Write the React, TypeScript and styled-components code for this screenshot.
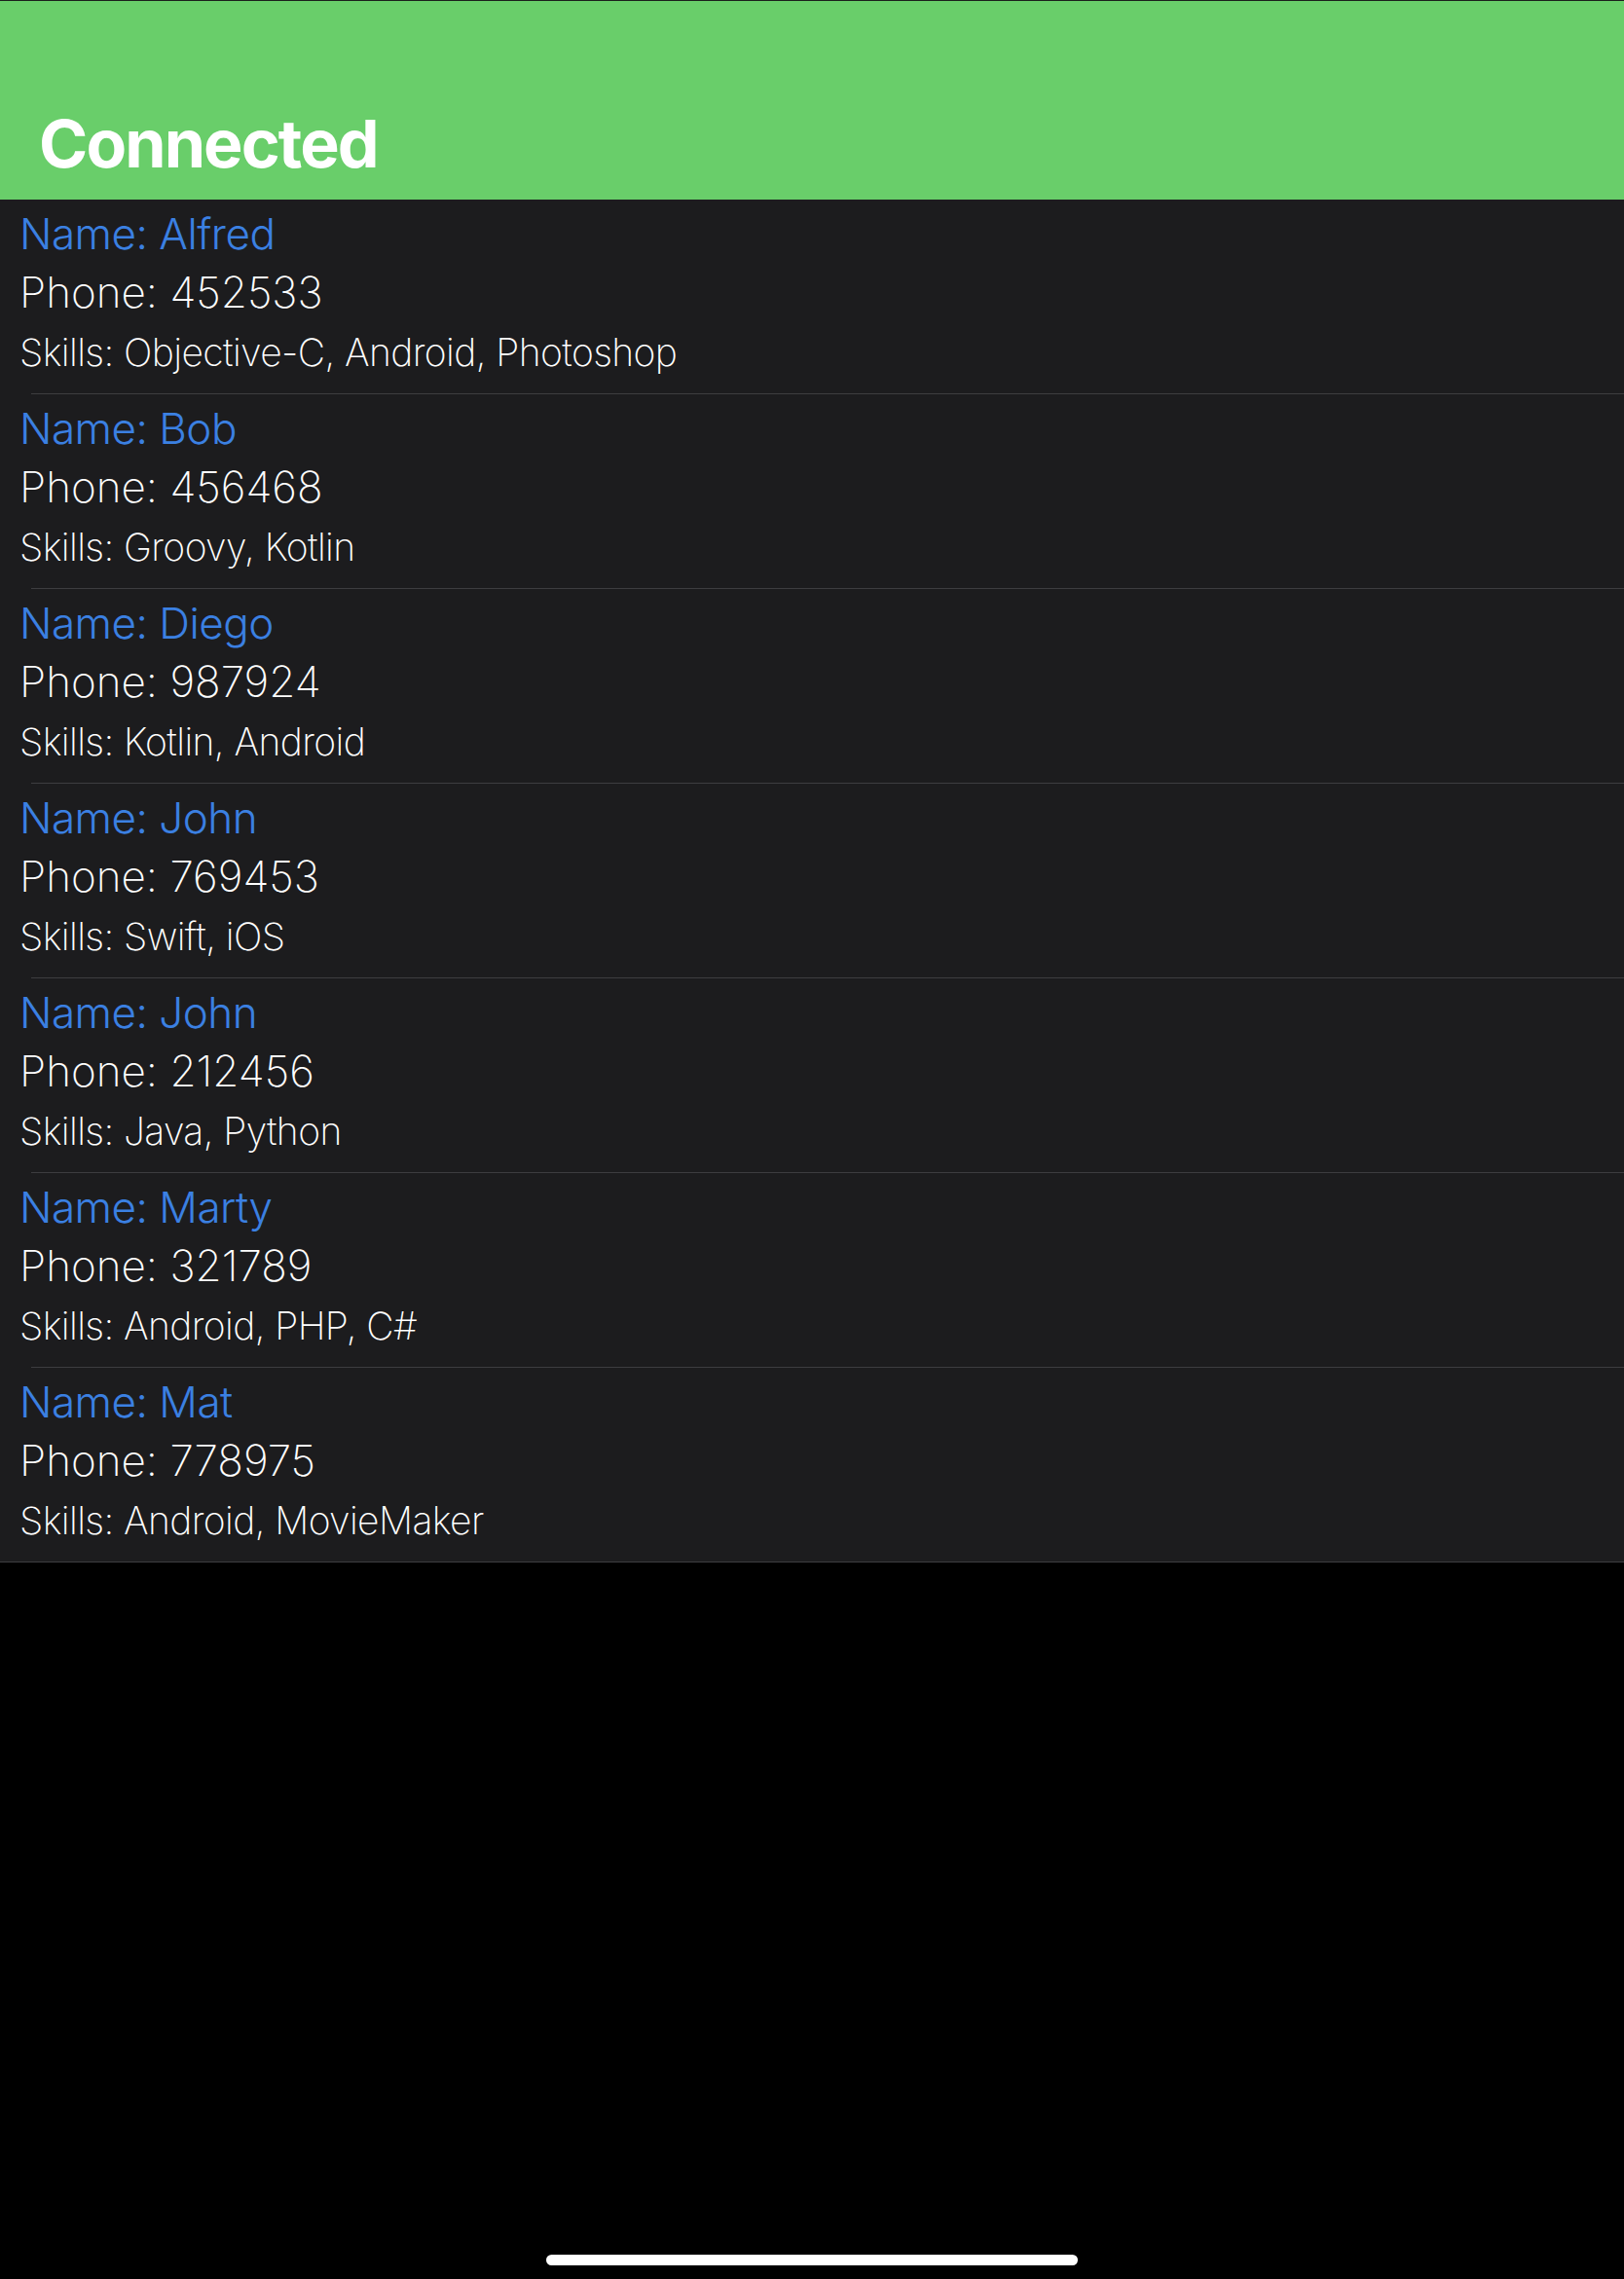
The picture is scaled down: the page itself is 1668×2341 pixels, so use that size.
import React from 'react';
import styled, { createGlobalStyle } from 'styled-components';

const GlobalStyle = createGlobalStyle`
  html, body {
    margin: 0;
    padding: 0;
    background: #000000;
  }
  body {
    font-family: Inter, "Noto Sans", "Liberation Sans", sans-serif;
    -webkit-font-smoothing: antialiased;
  }
`;

interface Person {
  name: string;
  phone: string;
  skills: string[];
}

const people: Person[] = [
  { name: 'Alfred', phone: '452533', skills: ['Objective-C', 'Android', 'Photoshop'] },
  { name: 'Bob', phone: '456468', skills: ['Groovy', 'Kotlin'] },
  { name: 'Diego', phone: '987924', skills: ['Kotlin', 'Android'] },
  { name: 'John', phone: '769453', skills: ['Swift', 'iOS'] },
  { name: 'John', phone: '212456', skills: ['Java', 'Python'] },
  { name: 'Marty', phone: '321789', skills: ['Android', 'PHP', 'C#'] },
  { name: 'Mat', phone: '778975', skills: ['Android', 'MovieMaker'] },
];

const Screen = styled.div`
  min-height: 2341px;
  display: flex;
  flex-direction: column;
  background: #000000;
`;

const Header = styled.header`
  background: #69ce6a;
  border-top: 1px solid #1b1f1b;
  padding: 105px 40px 17px;
`;

const Title = styled.h1`
  margin: 0;
  font-size: 68px;
  line-height: 82px;
  font-weight: 700;
  color: #ffffff;
  letter-spacing: -1.9px;
`;

const List = styled.div`
  background: #1c1c1e;
  border-bottom: 1px solid #3d3d40;
`;

const Row = styled.div`
  display: flex;
  flex-direction: column;
  padding: 7px 20px 12px;
`;

const NameLine = styled.div`
  font-size: 44px;
  line-height: 57px;
  font-weight: 300;
  letter-spacing: -0.5px;
  color: #3b80e2;
`;

const PhoneLine = styled.div`
  font-size: 44px;
  line-height: 62px;
  font-weight: 200;
  letter-spacing: 0;
  color: #ffffff;
`;

const SkillsLine = styled.div`
  font-size: 39px;
  line-height: 61px;
  font-weight: 200;
  letter-spacing: -0.6px;
  color: #ffffff;
`;

const Separator = styled.div`
  height: 1px;
  margin-left: 32px;
  background: #3d3d40;
`;

const Spacer = styled.div`
  flex: 1;
`;

const HomeIndicator = styled.div`
  align-self: center;
  width: 546px;
  height: 11px;
  border-radius: 6px;
  background: #ffffff;
  margin-bottom: 14px;
`;

export default function App() {
  return (
    <>
      <GlobalStyle />
      <Screen>
        <Header>
          <Title>Connected</Title>
        </Header>
        <List>
          {people.map((p, i) => (
            <React.Fragment key={i}>
              {i > 0 && <Separator />}
              <Row>
                <NameLine>Name: {p.name}</NameLine>
                <PhoneLine>Phone: {p.phone}</PhoneLine>
                <SkillsLine>Skills: {p.skills.join(', ')}</SkillsLine>
              </Row>
            </React.Fragment>
          ))}
        </List>
        <Spacer />
        <HomeIndicator />
      </Screen>
    </>
  );
}
